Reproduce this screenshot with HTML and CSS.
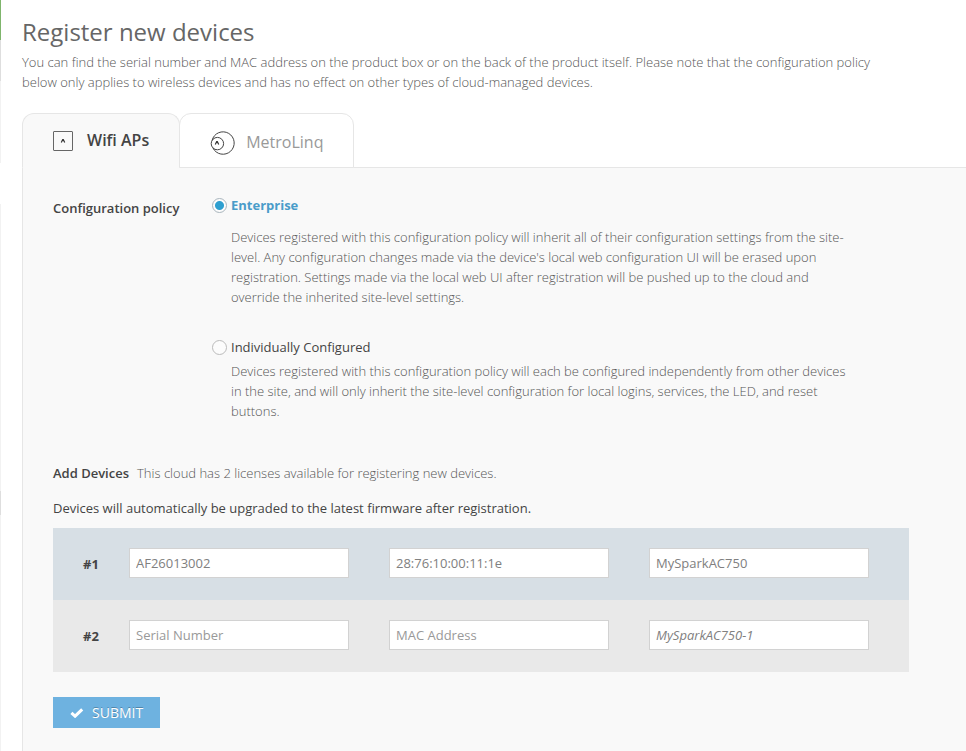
FILE: index.html
```html
<!DOCTYPE html>
<html lang="en">
<head>
  <meta charset="UTF-8">
  <meta name="viewport" content="width=device-width, initial-scale=1.0">
  <title>Register new devices</title>
  <link rel="stylesheet" href="styles.css">
</head>
<body>
  <div class="page">
    <div class="sidebar-edge"></div>
    <main class="content">
      <h1>Register new devices</h1>
      <p class="intro">You can find the serial number and MAC address on the product box or on the back of the product itself. Please note that the configuration policy below only applies to wireless devices and has no effect on other types of cloud-managed devices.</p>

      <div class="tabs" role="tablist">
        <button type="button" class="tab active" role="tab" aria-selected="true">
          <svg class="tab-icon" width="20" height="20" viewBox="0 0 20 20" fill="none" stroke="#666">
            <rect x="0.5" y="0.5" width="19" height="19" rx="0.5"/>
            <path d="M8.3 11.6l1.4-3.1h.6l1.4 3.1" stroke="#333" stroke-width="1.2"/>
          </svg>
          <span>Wifi APs</span>
        </button>
        <button type="button" class="tab" role="tab" aria-selected="false">
          <svg class="tab-icon" width="25" height="24" viewBox="0 0 25 24" fill="none" stroke="#444">
            <path d="M2.1 9.4A11.2 11.2 0 1 1 2.9 16.9"/>
            <circle cx="7.4" cy="12.6" r="6.2"/>
            <path d="M5.3 13.6l1.4-3.1h.6l1.4 3.1" stroke="#333" stroke-width="1.2"/>
          </svg>
          <span>MetroLinq</span>
        </button>
      </div>

      <form class="panel" id="registerForm">
        <div class="policy" role="radiogroup" aria-labelledby="policyTitle">
          <div class="policy-title" id="policyTitle">Configuration policy</div>
          <div class="policy-options">
            <div class="option selected">
              <input type="radio" id="enterprise" name="policy" value="enterprise" checked>
              <label for="enterprise">Enterprise</label>
              <p>Devices registered with this configuration policy will inherit all of their configuration settings from the site-level. Any configuration changes made via the device's local web configuration UI will be erased upon registration. Settings made via the local web UI after registration will be pushed up to the cloud and override the inherited site-level settings.</p>
            </div>
            <div class="option">
              <input type="radio" id="individual" name="policy" value="individual">
              <label for="individual">Individually Configured</label>
              <p>Devices registered with this configuration policy will each be configured independently from other devices in the site, and will only inherit the site-level configuration for local logins, services, the LED, and reset buttons.</p>
            </div>
          </div>
        </div>

        <p class="licenses"><strong>Add Devices</strong><span>This cloud has 2 licenses available for registering new devices.</span></p>
        <p class="firmware">Devices will automatically be upgraded to the latest firmware after registration.</p>

        <div class="devices">
          <div class="device filled">
            <span class="number">#1</span>
            <input type="text" name="serial1" aria-label="Serial Number" placeholder="Serial Number" value="AF26013002">
            <input type="text" name="mac1" aria-label="MAC Address" placeholder="MAC Address" value="28:76:10:00:11:1e">
            <input type="text" name="name1" aria-label="Device name" value="MySparkAC750">
          </div>
          <div class="device">
            <span class="number">#2</span>
            <input type="text" name="serial2" aria-label="Serial Number" placeholder="Serial Number">
            <input type="text" name="mac2" aria-label="MAC Address" placeholder="MAC Address">
            <input type="text" class="suggested" name="name2" aria-label="Device name" value="MySparkAC750-1">
          </div>
        </div>

        <button type="submit" class="submit">
          <svg width="14" height="10" viewBox="0 0 14 10" fill="none" stroke="#fff" stroke-width="3">
            <path d="M1.4 4.8l3.7 3.4L12.2 1.3"/>
          </svg>
          <span>SUBMIT</span>
        </button>
      </form>
    </main>
  </div>
</body>
</html>
```

FILE: styles.css
```css
* {
  box-sizing: border-box;
}
body {
  margin: 0;
  background: #fff;
  color: #444;
  font-family: "Open Sans", sans-serif;
  font-size: 13px;
  line-height: 20px;
}
h1, p {
  margin: 0;
}
input, button {
  font-family: inherit;
  font-size: 13px;
}
.page {
  display: flex;
  min-height: 100vh;
}
/* right edge of the collapsed menu */
.sidebar-edge {
  flex: none;
  width: 1px;
  background: linear-gradient(#7fb56c 40px, #dedede 40px 81px, #f2f2f2 81px 163px, #fff 163px 204px, #f2f2f2 204px 491px, #dedede 491px 515px, #f2f2f2 515px);
}
.content {
  flex: 1;
  display: flex;
  flex-direction: column;
  padding: 16px 0 0 21px;
}
h1 {
  font-size: 24px;
  font-weight: 400;
  line-height: 32px;
  color: #666;
  margin-bottom: 4px;
}
.intro {
  max-width: 870px;
  font-weight: 300;
  color: #555;
  margin-bottom: 21px;
}

.tabs {
  display: flex;
  position: relative;
  margin-bottom: -1px;
}
.tab {
  display: flex;
  align-items: center;
  gap: 11px;
  height: 55px;
  padding: 4px 30px 0;
  margin-left: -1px;
  border: 1px solid #e6e6e6;
  border-radius: 12px 12px 0 0;
  background: #fff;
  color: #999;
  font-size: 16px;
  line-height: 22px;
  cursor: pointer;
}
.tab.active {
  gap: 14px;
  margin-left: 0;
  padding-top: 0;
  border-bottom-color: #f9f9f9;
  background: #f9f9f9;
  color: #444;
  font-weight: 600;
}
.tab span {
  padding-bottom: 2px;
}

.panel {
  flex: 1;
  padding: 27px 30px 23px;
  border: solid #e6e6e6;
  border-width: 1px 0 0 1px;
  background: #f9f9f9;
}
.policy {
  display: flex;
  margin-bottom: 42px;
}
.policy-title {
  flex: none;
  width: 159px;
  padding-top: 3px;
  font-weight: 600;
}
.policy-options {
  max-width: 640px;
}
.option {
  display: grid;
  grid-template-columns: 15px 1fr;
  gap: 4px;
  align-items: center;
}
.option.selected {
  row-gap: 12px;
  margin-bottom: 30px;
}
.option.selected label {
  color: #4a9cc9;
  font-weight: 700;
}
.option p {
  grid-column: 2;
  font-weight: 300;
  color: #555;
}
.option input {
  appearance: none;
  width: 15px;
  height: 15px;
  margin: 0;
  border: 1px solid #bbb;
  border-radius: 50%;
  background: #fcfcfc;
}
.option input:checked {
  border-color: #a9b5bd;
  background: radial-gradient(circle, #2e9fd0 4px, #fcfcfc 5px);
}

.licenses {
  margin-bottom: 15px;
}
.licenses strong {
  font-weight: 600;
  margin-right: 8px;
}
.licenses span {
  font-weight: 300;
  color: #555;
}
.firmware {
  margin-bottom: 10px;
}
.devices {
  max-width: 856px;
  margin-bottom: 25px;
}
.device {
  display: flex;
  gap: 40px;
  padding: 20px 40px 22px 30px;
  background: #e9e9e9;
}
.device.filled {
  background: #d7dfe5;
}
.number {
  flex: none;
  width: 46px;
  margin-right: -40px;
  line-height: 32px;
  height: 30px;
  font-weight: 700;
}
.device input {
  flex: 1;
  min-width: 0;
  height: 30px;
  padding: 0 6px;
  border: 1px solid #d2d2d2;
  border-radius: 0;
  background: #fff;
  color: #808080;
}
.device input::placeholder {
  color: #999;
}
.device .suggested {
  font-style: italic;
}
.submit {
  display: flex;
  align-items: center;
  gap: 8px;
  height: 31px;
  padding: 0 17px;
  border: 0;
  background: #6eb2e0;
  color: #fff;
  font-size: 14px;
  font-weight: 400;
  text-shadow: 0 -1px 0 rgba(0, 0, 0, 0.25);
  cursor: pointer;
}
.submit:hover {
  background: #5ba5d6;
}
```
